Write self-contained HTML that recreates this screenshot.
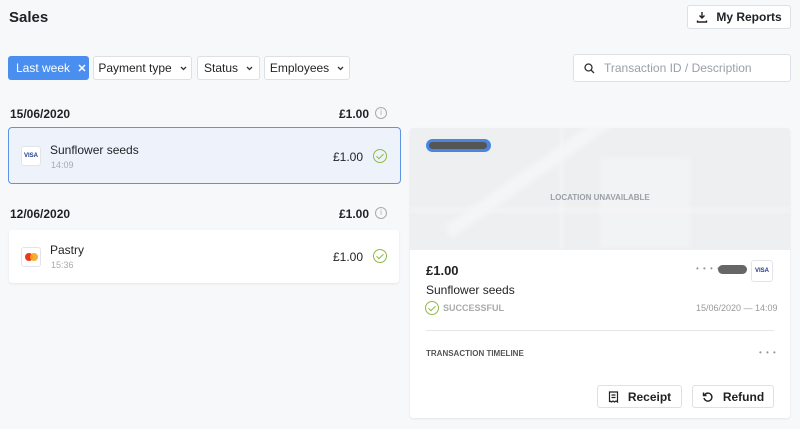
<!DOCTYPE html>
<html><head><style>
*{box-sizing:border-box;margin:0;padding:0}
body{width:800px;height:429px;background:#f7f8fa;font-family:"Liberation Sans",sans-serif;color:#1f2124;position:relative;overflow:hidden}
.a{position:absolute}
.btn{position:absolute;background:#fff;border:1px solid #dde0e4;border-radius:3px;font-size:12px;display:flex;align-items:center;justify-content:center}
.card{position:absolute;background:#fff;border-radius:3px;box-shadow:0 1px 2px rgba(0,0,0,.08)}
.chk{position:absolute;width:14px;height:14px;border:1.5px solid #8fb84a;border-radius:50%}
.chk:after{content:"";position:absolute;left:3.5px;top:1.5px;width:3px;height:6px;border:solid #8fb84a;border-width:0 1.5px 1.5px 0;transform:rotate(45deg)}
.info{position:absolute;width:12px;height:12px;border:1px solid #aaa;border-radius:50%;font-size:8px;color:#aaa;text-align:center;line-height:10px}
.logo{position:absolute;width:20px;height:20px;border:1px solid #e2e4e8;border-radius:3px;background:#fff}
.chev{margin-left:8px}
</style></head><body>
<div class="a" style="left:9px;top:9px;font-size:15px;font-weight:bold">Sales</div>
<div class="btn" style="left:687px;top:5px;width:104px;height:24px;font-weight:bold">
<svg width="12" height="12" viewBox="0 0 12 12" style="margin-right:8px"><path d="M6 1v6M3.5 4.5L6 7l2.5-2.5M1.5 9.5v1.5h9V9.5" stroke="#222" stroke-width="1.4" fill="none"/></svg>My Reports</div>
<div class="a" style="left:8px;top:56px;width:81px;height:24px;background:#4a8ef0;border-radius:3px;color:#fff;font-size:12px;line-height:24px;padding-left:8px">Last week
<svg width="8" height="8" viewBox="0 0 8 8" style="margin-left:5px"><path d="M1 1l6 6M7 1L1 7" stroke="#fff" stroke-width="1.5"/></svg></div>
<div class="btn" style="left:93px;top:56px;width:99px;height:24px">Payment type<svg class="chev" width="7" height="5" viewBox="0 0 7 5"><path d="M1 1l2.5 2.5L6 1" stroke="#333" stroke-width="1.3" fill="none"/></svg></div>
<div class="btn" style="left:197px;top:56px;width:63px;height:24px">Status<svg class="chev" width="7" height="5" viewBox="0 0 7 5"><path d="M1 1l2.5 2.5L6 1" stroke="#333" stroke-width="1.3" fill="none"/></svg></div>
<div class="btn" style="left:264px;top:56px;width:86px;height:24px">Employees<svg class="chev" width="7" height="5" viewBox="0 0 7 5"><path d="M1 1l2.5 2.5L6 1" stroke="#333" stroke-width="1.3" fill="none"/></svg></div>
<div class="btn" style="left:573px;top:54px;width:218px;height:28px;justify-content:flex-start;padding-left:10px;color:#9aa0a8">
<svg width="11" height="11" viewBox="0 0 11 11" style="margin-right:9px"><circle cx="4.5" cy="4.5" r="3.5" stroke="#333" stroke-width="1.3" fill="none"/><path d="M7 7l3 3" stroke="#333" stroke-width="1.3"/></svg>Transaction ID / Description</div>

<div class="a" style="left:10px;top:107px;font-size:12px;font-weight:bold">15/06/2020</div>
<div class="a" style="left:339px;top:107px;font-size:12px;font-weight:bold">£1.00</div>
<div class="info" style="left:375px;top:107px">i</div>
<div class="a" style="left:8px;top:127px;width:393px;height:57px;background:#eef3fb;border:1.5px solid #5b94e6;border-radius:4px"></div>
<div class="logo" style="left:21px;top:146px;font-size:6px;font-weight:bold;color:#1a3a8a;text-align:center;line-height:18px">VISA</div>
<div class="a" style="left:50px;top:143px;font-size:12px">Sunflower seeds</div>
<div class="a" style="left:51px;top:160px;font-size:9px;color:#aaa">14:09</div>
<div class="a" style="left:333px;top:150px;font-size:12px">£1.00</div>
<div class="chk" style="left:373px;top:149px"></div>

<div class="a" style="left:10px;top:207px;font-size:12px;font-weight:bold">12/06/2020</div>
<div class="a" style="left:339px;top:207px;font-size:12px;font-weight:bold">£1.00</div>
<div class="info" style="left:375px;top:207px">i</div>
<div class="card" style="left:9px;top:230px;width:390px;height:53px"></div>
<div class="logo" style="left:21px;top:247px"><div class="a" style="left:3px;top:5px;width:8px;height:8px;border-radius:50%;background:#e8391d"></div><div class="a" style="left:8px;top:5px;width:8px;height:8px;border-radius:50%;background:#f5a41f;opacity:.9"></div></div>
<div class="a" style="left:50px;top:243px;font-size:12px">Pastry</div>
<div class="a" style="left:51px;top:260px;font-size:9px;color:#aaa">15:36</div>
<div class="a" style="left:333px;top:250px;font-size:12px">£1.00</div>
<div class="chk" style="left:373px;top:249px"></div>

<div class="card" style="left:410px;top:128px;width:380px;height:290px;overflow:hidden">
<div class="a" style="left:0;top:0;width:380px;height:122px;background:#eeeff0;overflow:hidden">
<div class="a" style="left:20px;top:40px;width:200px;height:14px;background:#f4f5f6;transform:rotate(-35deg);filter:blur(3px)"></div>
<div class="a" style="left:190px;top:30px;width:90px;height:90px;background:#f2f3f4;filter:blur(3px)"></div>
<div class="a" style="left:150px;top:0;width:3px;height:122px;background:#f5f5f6;filter:blur(2px)"></div>
<div class="a" style="left:0;top:80px;width:380px;height:4px;background:#f4f5f6;filter:blur(2px)"></div>
<div class="a" style="left:16px;top:11px;width:65px;height:13px;background:#4a86e0;border-radius:7px"><div class="a" style="left:3px;top:3px;width:58px;height:7px;background:#555;border-radius:4px"></div></div>
<div class="a" style="left:0;top:65px;width:380px;text-align:center;font-size:8px;color:#9aa0a8;font-weight:bold">LOCATION UNAVAILABLE</div>
</div>
<div class="a" style="left:16px;top:135px;font-size:13px;font-weight:bold">£1.00</div>
<div class="a" style="left:286px;top:136px;font-size:8px;color:#999;letter-spacing:1px">• • • •</div>
<div class="a" style="left:308px;top:137px;width:29px;height:9px;background:#666;border-radius:5px"></div>
<div class="logo" style="left:341px;top:132px;width:22px;height:22px;font-size:6px;font-weight:bold;color:#1a3a8a;text-align:center;line-height:20px">VISA</div>
<div class="a" style="left:16px;top:155px;font-size:12px">Sunflower seeds</div>
<div class="chk" style="left:15px;top:173px"></div>
<div class="a" style="left:33px;top:175px;font-size:9px;color:#aaa;font-weight:bold">SUCCESSFUL</div>
<div class="a" style="left:286px;top:175px;font-size:9px;color:#999">15/06/2020 — 14:09</div>
<div class="a" style="left:16px;top:202px;width:348px;height:1px;background:#e5e7ea"></div>
<div class="a" style="left:16px;top:221px;font-size:8px;font-weight:bold;color:#555">TRANSACTION TIMELINE</div>
<div class="a" style="left:349px;top:220px;font-size:8px;color:#999;letter-spacing:1px">• • •</div>
<div class="btn" style="left:187px;top:257px;width:85px;height:23px;font-weight:bold;font-size:12px">
<svg width="11" height="12" viewBox="0 0 11 12" style="margin-right:9px"><path d="M1.5 1h8v10l-1.5-1-1.5 1-1.5-1-1.5 1-1.5-1-.5 1z M3.5 4h4M3.5 6.5h4" stroke="#222" stroke-width="1.2" fill="none"/></svg>Receipt</div>
<div class="btn" style="left:282px;top:257px;width:82px;height:23px;font-weight:bold;font-size:12px">
<svg width="12" height="12" viewBox="0 0 12 12" style="margin-right:9px"><path d="M2.5 4A4 4 0 1 1 2 7" stroke="#222" stroke-width="1.4" fill="none"/><path d="M1.5 1.5v3h3" stroke="#222" stroke-width="1.4" fill="none"/></svg>Refund</div>
</div>
</body></html>
